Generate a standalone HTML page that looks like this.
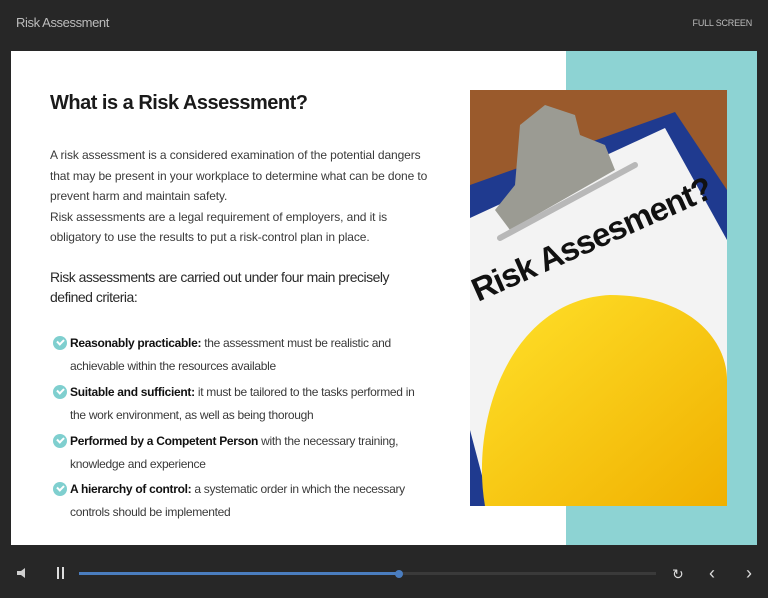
<!DOCTYPE html>
<html><head><meta charset="utf-8"><style>
*{margin:0;padding:0;box-sizing:border-box}
body{width:768px;height:598px;background:#272727;font-family:"Liberation Sans",sans-serif;position:relative;overflow:hidden}
.top{position:absolute;left:16px;top:15px;color:#bdbdbd;font-size:13px;letter-spacing:-0.4px}
.fs{position:absolute;right:16px;top:18px;color:#bdbdbd;font-size:9px;letter-spacing:-0.2px}
.slide{position:absolute;left:11px;top:51px;width:746px;height:494px;background:#fff}
.teal{position:absolute;left:555px;top:0;width:191px;height:494px;background:#8dd3d3}
h1{position:absolute;left:39px;top:41px;font-size:20px;font-weight:bold;color:#1a1a1a;letter-spacing:-0.5px}
.p{position:absolute;left:39px;top:94px;font-size:12px;line-height:20.5px;color:#3a3a3a;letter-spacing:-0.1px;white-space:nowrap}
.c{position:absolute;left:39px;top:216px;font-size:14px;line-height:20px;color:#2a2a2a;letter-spacing:-0.5px;white-space:nowrap}
.li{position:absolute;left:59px;font-size:12px;line-height:23px;color:#3a3a3a;letter-spacing:-0.3px;white-space:nowrap}
.li b{color:#111}
.ck{position:absolute;left:42px;width:14px;height:14px;border-radius:50%;background:#7fcfcf}
.ck:after{content:"";position:absolute;left:4px;top:3px;width:5px;height:3px;border-left:2px solid #fff;border-bottom:2px solid #fff;transform:rotate(-45deg)}
.bar{position:absolute;left:79px;top:572px;width:577px;height:3px;background:#3a3a3a}
.fill{position:absolute;left:79px;top:572px;width:320px;height:3px;background:#4a7dbf}
.knob{position:absolute;left:395px;top:570px;width:8px;height:8px;border-radius:50%;background:#4a7dbf}
</style></head><body>
<div class="top">Risk Assessment</div>
<div class="fs">FULL SCREEN</div>
<div class="slide">
<div class="teal"></div>
<h1>What is a Risk Assessment?</h1>
<div class="p">A risk assessment is a considered examination of the potential dangers<br>that may be present in your workplace to determine what can be done to<br>prevent harm and maintain safety.<br>Risk assessments are a legal requirement of employers, and it is<br>obligatory to use the results to put a risk-control plan in place.</div>
<div class="c">Risk assessments are carried out under four main precisely<br>defined criteria:</div>
<div class="ck" style="top:285px"></div>
<div class="li" style="top:281px"><b>Reasonably practicable:</b> the assessment must be realistic and<br>achievable within the resources available</div>
<div class="ck" style="top:334px"></div>
<div class="li" style="top:330px"><b>Suitable and sufficient:</b> it must be tailored to the tasks performed in<br>the work environment, as well as being thorough</div>
<div class="ck" style="top:383px"></div>
<div class="li" style="top:379px"><b>Performed by a Competent Person</b> with the necessary training,<br>knowledge and experience</div>
<div class="ck" style="top:431px"></div>
<div class="li" style="top:427px"><b>A hierarchy of control:</b> a systematic order in which the necessary<br>controls should be implemented</div>
<svg style="position:absolute;left:459px;top:39px" width="257" height="416" viewBox="0 0 257 416">
<defs><linearGradient id="y" x1="0" y1="0" x2="1" y2="1"><stop offset="0" stop-color="#ffe12a"/><stop offset="1" stop-color="#f0b000"/></linearGradient></defs>
<rect width="257" height="416" fill="#9a5a2c"/>
<polygon points="0,95 205,22 257,100 257,416 0,416" fill="#1f3a8f"/>
<polygon points="0,128 195,38 257,150 257,416 20,416 0,340" fill="#f3f3f3"/>
<polygon points="50,35 75,15 105,25 110,45 135,55 145,80 40,140 25,120 45,95" fill="#9b9b93"/>
<line x1="30" y1="148" x2="165" y2="75" stroke="#b8b8b8" stroke-width="6" stroke-linecap="round"/>
<text x="0" y="0" transform="translate(8,212) rotate(-24)" font-family="Liberation Sans" font-weight="bold" font-size="33" fill="#111" letter-spacing="-1">Risk Assesment?</text>
<path d="M15,416 C0,330 40,210 140,205 C220,205 257,250 257,290 L257,416 Z" fill="url(#y)"/>
</svg>
</div>
<div style="position:absolute;left:17px;top:568px;width:10px;height:10px;background:#cfcfcf;clip-path:polygon(0 30%,40% 30%,80% 0,80% 100%,40% 70%,0 70%)"></div>
<div style="position:absolute;left:57px;top:567px;width:2px;height:12px;background:#ddd"></div>
<div style="position:absolute;left:62px;top:567px;width:2px;height:12px;background:#ddd"></div>
<div class="bar"></div><div class="fill"></div><div class="knob"></div>
<div style="position:absolute;left:672px;top:566px;color:#ddd;font-size:14px">↻</div>
<div style="position:absolute;left:709px;top:563px;color:#ddd;font-size:18px">‹</div>
<div style="position:absolute;left:746px;top:563px;color:#ddd;font-size:18px">›</div>
</body></html>
